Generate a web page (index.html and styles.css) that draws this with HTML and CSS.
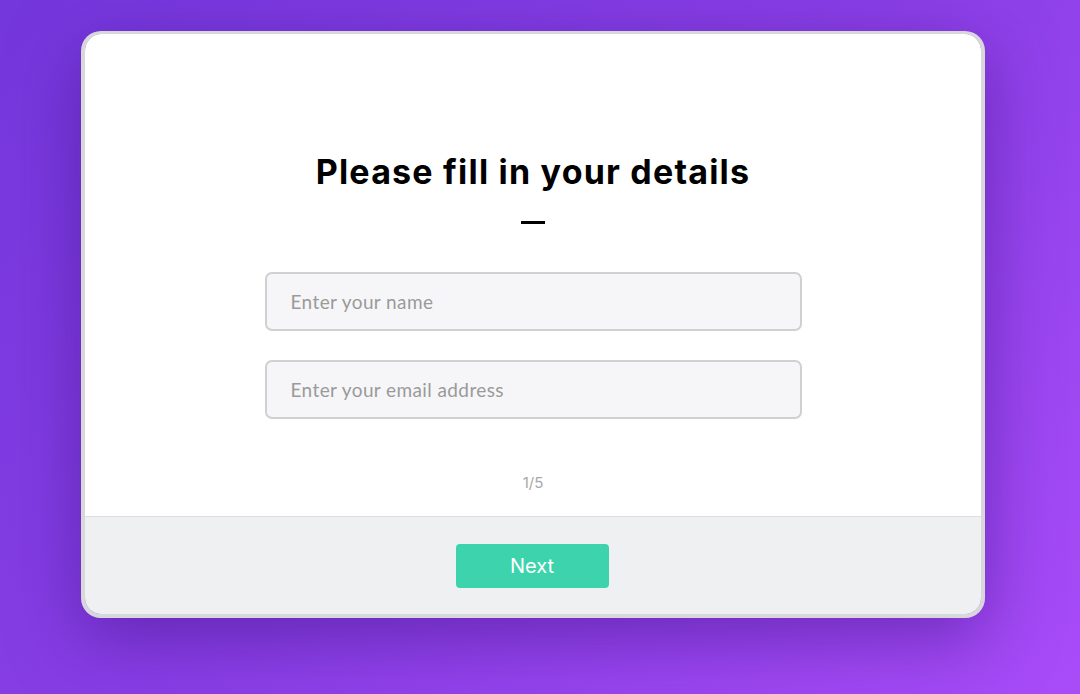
FILE: index.html
```html
<!DOCTYPE html>
<html>
<head>
  <title>Your details</title>
  <link rel="stylesheet" href="styles.css">
</head>
<body>
  <div class="card">
    <div class="card-body">
      <h1>Please fill in your details</h1>
      <span class="dash"></span>

      <form class="details-form">
        <input type="text" id="name" placeholder="Enter your name">
        <input type="email" id="email" placeholder="Enter your email address">
      </form>

      <p class="step">1/5</p>
    </div>

    <div class="card-footer">
      <button id="next">Next</button>
    </div>
  </div>
</body>
</html>
```

FILE: styles.css
```css
html, body {
  margin: 0;
  height: 100%;
}

body {
  background: linear-gradient(135deg, #7437dc 0%, #8a3fe6 50%, #a84cf8 100%);
  font-family: Inter, 'Open Sans', sans-serif;
  padding: 31px 95px 0 81px;
  box-sizing: border-box;
}

.card {
  width: 904px;
  border: 4px solid #d8d8da;
  border-top-width: 3px;
  border-radius: 20px;
  overflow: hidden;
  box-sizing: border-box;
  box-shadow: 0 20px 70px rgba(70, 20, 140, 0.55);
}

.card-body {
  background-color: #fff;
  height: 482px;
  display: flex;
  flex-direction: column;
  align-items: center;
  padding-top: 118px;
  box-sizing: border-box;
}

h1 {
  margin: 0;
  font-size: 34px;
  font-weight: 700;
  color: #000;
  line-height: 40px;
  letter-spacing: 1.2px;
}

.dash {
  display: block;
  width: 24px;
  height: 3px;
  background-color: #000;
  margin-top: 29px;
}

.details-form {
  display: flex;
  flex-direction: column;
  gap: 29px;
  margin-top: 48px;
}

.details-form input {
  width: 537px;
  height: 59px;
  box-sizing: border-box;
  padding: 0 24px;
  border: 2px solid #d0d0d3;
  border-radius: 7px;
  background-color: #f6f6f8;
  font-family: Lato, 'Open Sans', sans-serif;
  font-size: 19px;
  letter-spacing: 0.4px;
  color: #333;
}
.details-form input::placeholder {
  color: #9a9a9a;
}

.step {
  margin: 54px 0 0;
  font-size: 15px;
  color: #a8a8a8;
}

.card-footer {
  background-color: #eff0f2;
  border-top: 1px solid #dedee0;
  height: 98px;
  display: flex;
  justify-content: center;
  align-items: flex-start;
  padding-top: 27px;
  box-sizing: border-box;
}

button {
  width: 153px;
  height: 44px;
  margin-left: -2px;
  border: none;
  border-radius: 4px;
  background-color: #3dd4ad;
  color: #fff;
  font-family: Inter, 'Open Sans', sans-serif;
  font-size: 20px;
  font-weight: 400;
  cursor: pointer;
}
```
